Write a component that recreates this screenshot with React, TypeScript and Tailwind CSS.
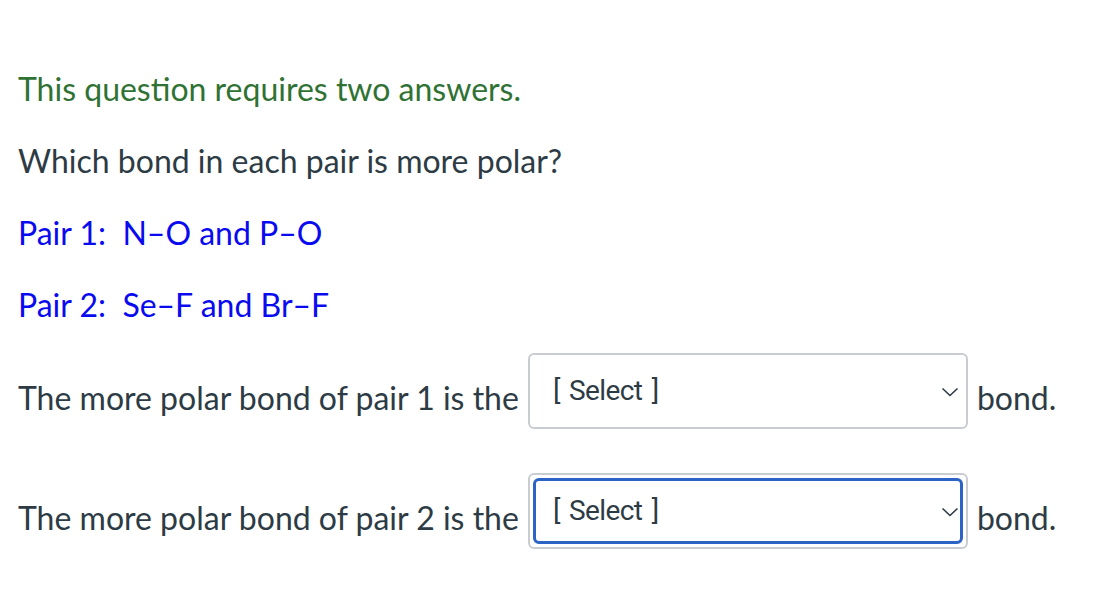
function Dropdown({ focused }: { focused?: boolean }) {
  return (
    <div className="w-[440px] h-[76px] rounded-[6px] border-2 border-[#c9cdd1] bg-white p-[3px] shrink-0">
      <div
        className={
          focused
            ? 'h-full rounded-[6px] border-[3px] border-[#2b63c6] flex items-center pl-[17px] pr-[1px]'
            : 'h-full rounded-[6px] border-[3px] border-transparent flex items-center pl-[17px] pr-[1px]'
        }
      >
        <span className="flex-1 text-[28px] text-[#2d3b45] font-['Roboto',sans-serif] -mt-[1px] tracking-[-0.6px] [word-spacing:3px]">
          [ Select ]
        </span>
        <svg width="18" height="12" viewBox="0 0 18 12" fill="none" className="mt-[2px]">
          <polyline points="1.5,2.5 9,9.5 16.5,2.5" stroke="#2d3b45" strokeWidth="1.6" />
        </svg>
      </div>
    </div>
  )
}

function AnswerRow({ n, focused }: { n: number; focused?: boolean }) {
  return (
    <div className="flex items-center gap-[9px]">
      <span className="pt-[14px]">The more polar bond of pair {n} is the</span>
      <Dropdown focused={focused} />
      <span className="pt-[14px]">bond.</span>
    </div>
  )
}

export default function App() {
  return (
    <div className="w-[1108px] h-[592px] bg-white font-['Lato',sans-serif] text-[32px] text-[#2d3b45] pl-[18px] pt-[69px]">
      <p className="text-[#2f7234] leading-[40px]">This question requires two answers.</p>
      <p className="mt-[32px] leading-[40px]">Which bond in each pair is more polar?</p>
      <p className="mt-[32px] leading-[40px] text-[#0a0af0]">Pair 1:&nbsp; N–O and P–O</p>
      <p className="mt-[32px] leading-[40px] text-[#0a0af0]">Pair 2:&nbsp; Se–F and Br–F</p>
      <div className="mt-[28px] flex flex-col gap-[44px]">
        <AnswerRow n={1} />
        <AnswerRow n={2} focused />
      </div>
    </div>
  )
}
